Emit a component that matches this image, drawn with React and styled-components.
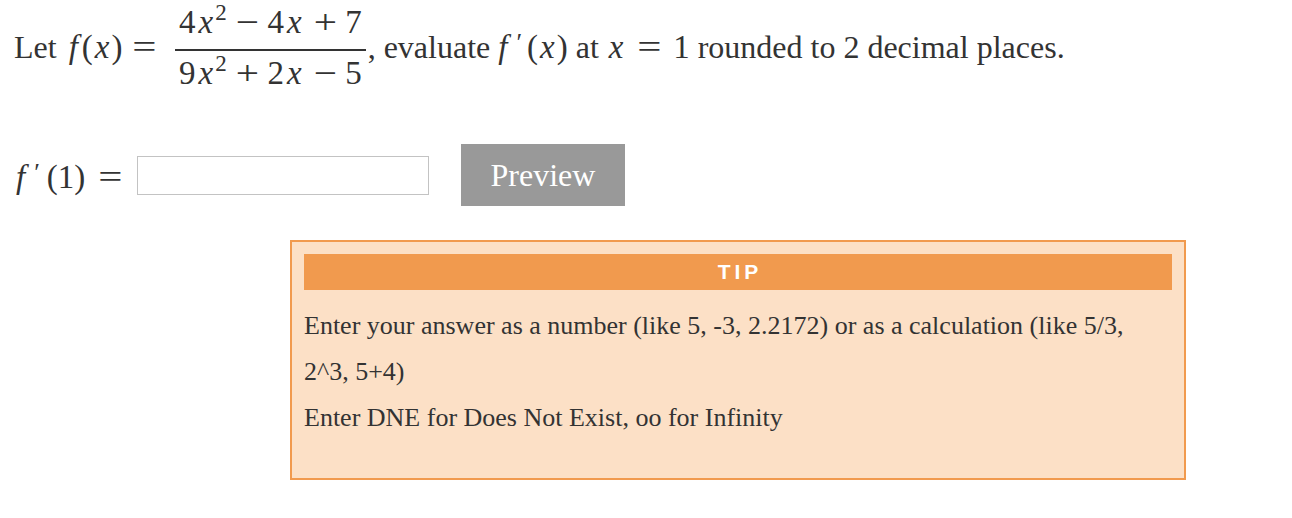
import React from "react";
import styled, { createGlobalStyle } from "styled-components";

const Global = createGlobalStyle`
  html, body { margin: 0; padding: 0; background: #fff; }
  body { font-family: "Liberation Serif", "Times New Roman", serif; color: #333; }
`;

const Page = styled.div`
  padding: 6px 14px 0 14px;
`;

const Question = styled.div`
  font-size: 32px;
  line-height: 32px;
  white-space: nowrap;
`;

const Math = styled.span`
  font-family: "Liberation Serif", serif;
  font-size: 33px;
`;

const VarX = styled.span`
  font-style: italic;
  padding: 0 ${(p) => p.$pad ?? 2}px;
`;

const VarF = styled.span`
  font-style: italic;
  padding: 0 4px 0 ${(p) => p.$lead ?? 0}px;
`;

const Prime = styled.span`
  font-size: 26px;
  vertical-align: 7px;
  margin: 0 ${(p) => p.$after ?? 5}px 0 5px;
`;

const Rel = styled.span`
  display: inline-block;
  margin: 0 ${(p) => p.$after ?? 13}px 0 ${(p) => p.$before ?? 13}px;
  transform: scaleX(1.3);
`;

const Frac = styled.span`
  display: inline-flex;
  flex-direction: column;
  align-items: stretch;
  vertical-align: 25px;
  margin: 0 2px 0 2px;
  font-size: 33px;
`;

const Num = styled.span`
  display: block;
  text-align: center;
  padding: 0 4px 10px;
  line-height: 33px;
`;

const Den = styled.span`
  display: block;
  text-align: center;
  border-top: 2px solid #333;
  padding: 6px 4px 0;
  line-height: 33px;
`;

const Op = styled.span`
  display: inline-block;
  margin: 0 11px;
  transform: scaleX(1.25);
`;

const Sup = styled.sup`
  font-size: 23px;
  vertical-align: 13px;
  line-height: 0;
  margin-left: -1px;
`;

const AnswerRow = styled.div`
  display: flex;
  align-items: center;
  margin-top: 54px;
  height: 62px;
`;

const Label = styled.span`
  font-size: 32px;
  line-height: 32px;
  white-space: nowrap;
  width: 123px;
`;

const Input = styled.input`
  box-sizing: border-box;
  width: 292px;
  height: 39px;
  border: 1px solid #c3c3c3;
  background: #fff;
  outline: none;
  padding: 0 6px;
  font-family: "Liberation Serif", serif;
  font-size: 22px;
`;

const Button = styled.button`
  box-sizing: border-box;
  margin-left: 32px;
  width: 164px;
  height: 62px;
  border: none;
  background: #999999;
  color: #fff;
  font-family: "Liberation Serif", serif;
  font-size: 32px;
  padding: 0;
  cursor: pointer;
`;

const Tip = styled.div`
  box-sizing: border-box;
  margin: 34px 0 0 276px;
  width: 896px;
  height: 240px;
  border: 2px solid #f19a4e;
  background: #fce0c6;
  padding: 12px;
`;

const TipHeader = styled.div`
  height: 36px;
  background: #f19a4e;
  color: #fff;
  font-family: "Liberation Sans", Arial, sans-serif;
  font-weight: bold;
  font-size: 21px;
  letter-spacing: 4px;
  text-indent: 4px;
  line-height: 36px;
  text-align: center;
`;

const TipBody = styled.div`
  padding-top: 13px;
  font-size: 26px;
  color: #333;
`;

const TipPara = styled.p`
  margin: 0;
  line-height: 46px;
  white-space: nowrap;
`;

export default function App() {
  return (
    <>
      <Global />
      <Page>
        <Question>
          <span>Let </span>
          <Math>
            <VarF $lead={4}>f</VarF>(<VarX>x</VarX>)<Rel $before={13} $after={19}>=</Rel>
          </Math>
          <Frac>
            <Num>
              4<VarX $pad={3}>x</VarX>
              <Sup>2</Sup>
              <Op>−</Op>4<VarX $pad={3}>x</VarX>
              <Op>+</Op>7
            </Num>
            <Den>
              9<VarX $pad={3}>x</VarX>
              <Sup>2</Sup>
              <Op>+</Op>2<VarX $pad={3}>x</VarX>
              <Op>−</Op>5
            </Den>
          </Frac>
          <span>, evaluate </span>
          <Math>
            <VarF>f</VarF>
            <Prime>′</Prime>(<VarX>x</VarX>)
          </Math>
          <span> at </span>
          <Math>
            <VarX>x</VarX>
            <Rel $before={14} $after={15}>=</Rel>1
          </Math>
          <span> rounded to 2 decimal places.</span>
        </Question>
        <AnswerRow>
          <Label>
            <Math>
              <VarF $lead={2}>f</VarF>
              <Prime $after={7}>′</Prime>(1)<Rel $before={16} $after={0}>=</Rel>
            </Math>
          </Label>
          <Input type="text" aria-label="answer" />
          <Button>Preview</Button>
        </AnswerRow>
        <Tip>
          <TipHeader>TIP</TipHeader>
          <TipBody>
            <TipPara>
              Enter your answer as a number (like 5, -3, 2.2172) or as a calculation (like 5/3,
              <br />
              2^3, 5+4)
            </TipPara>
            <TipPara>Enter DNE for Does Not Exist, oo for Infinity</TipPara>
          </TipBody>
        </Tip>
      </Page>
    </>
  );
}
